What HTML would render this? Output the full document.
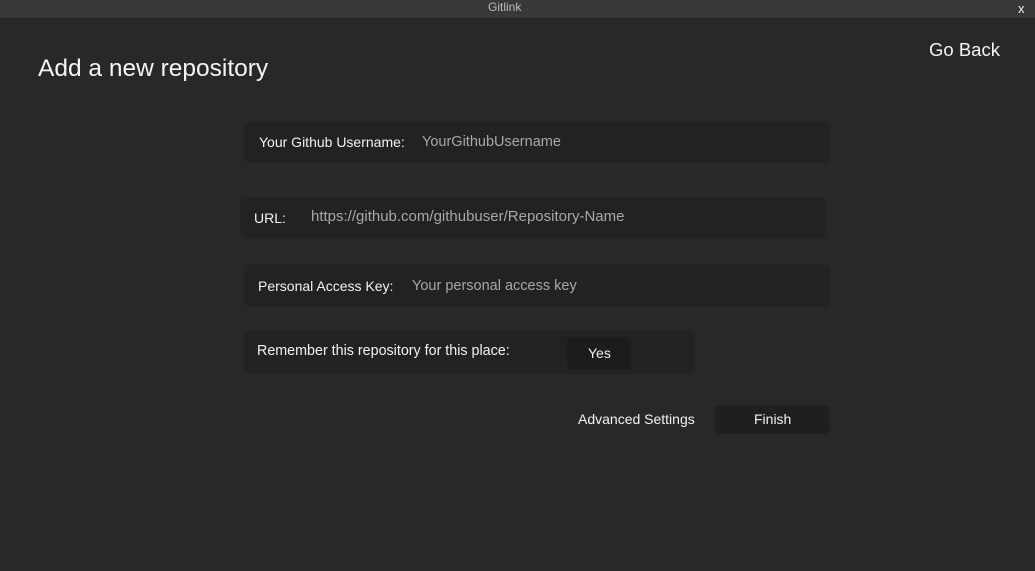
<!DOCTYPE html>
<html><head><meta charset="utf-8"><style>
*{margin:0;padding:0;box-sizing:border-box}
body{width:1035px;height:571px;background:#282828;font-family:"Liberation Sans",sans-serif;color:#fff;position:relative;overflow:hidden}
.t{position:absolute;white-space:nowrap}
.bar{position:absolute;left:0;top:0;width:1035px;height:19px;background:#383838;border-bottom:1px solid #222}
.box{position:absolute;background:#222;border-radius:7px}
.lbl{font-size:14px;color:#f2f2f2}
.ph{font-size:14.5px;color:#a8a8a8}
</style></head><body>
<div class="bar"></div>
<div class="t" style="left:488px;top:0px;font-size:12px;color:#bbb">Gitlink</div>
<div class="t" style="left:1018px;top:1px;font-size:13px;color:#eee">x</div>
<div class="t" style="left:38px;top:55px;font-size:24.5px;color:#f4f4f4">Add a new repository</div>
<div class="t" style="left:929px;top:39px;font-size:18.5px;color:#f4f4f4">Go Back</div>

<div class="box" style="left:244px;top:121px;width:586px;height:42px"></div>
<div class="t lbl" style="left:259px;top:134px">Your Github Username:</div>
<div class="t ph" style="left:422px;top:134px">YourGithubUsername</div>

<div class="box" style="left:240px;top:197px;width:586px;height:42px"></div>
<div class="t lbl" style="left:254px;top:210px">URL:</div>
<div class="t ph" style="left:311px;top:208px;font-size:15px">https://github.com/githubuser/Repository-Name</div>

<div class="box" style="left:244px;top:264px;width:586px;height:43px"></div>
<div class="t lbl" style="left:258px;top:278px">Personal Access Key:</div>
<div class="t ph" style="left:412px;top:278px">Your personal access key</div>

<div class="box" style="left:244px;top:331px;width:451px;height:43px"></div>
<div class="t lbl" style="left:257px;top:343px;font-size:14.3px">Remember this repository for this place:</div>
<div class="box" style="left:567px;top:337px;width:64px;height:33px;background:#1c1c1c"></div>
<div class="t lbl" style="left:588px;top:345px">Yes</div>

<div class="t lbl" style="left:578px;top:411px">Advanced Settings</div>
<div class="box" style="left:714px;top:405px;width:116px;height:29px;background:#1f1f1f"></div>
<div class="t lbl" style="left:754px;top:411px">Finish</div>
</body></html>
